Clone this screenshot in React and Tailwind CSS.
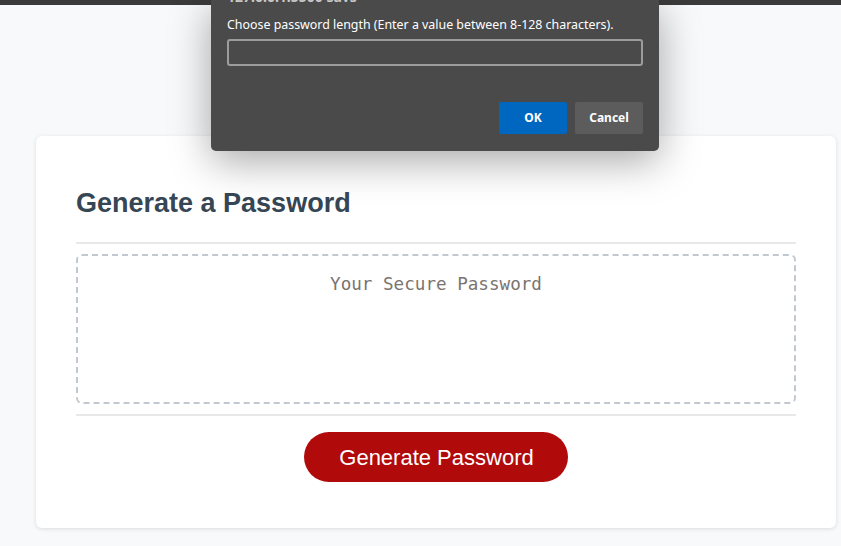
import React from 'react';

const PromptDialog = () => {
    return (
        <div className="absolute left-[211px] top-0 w-[448px] h-[151px] bg-[#4a4a4a] rounded-b-[5px] shadow-[0_10px_40px_rgba(0,0,0,0.35)] overflow-hidden font-['Noto_Sans',sans-serif]">
            <div className="px-4 -mt-[10px]">
                <div className="text-[14px] font-bold text-[#c8c8c8] leading-[14px] h-[12px] overflow-hidden">127.0.0.1:5500 says</div>
                <p className="text-white text-[12.4px] leading-[18px] mt-[14px]">
                    Choose password length (Enter a value between 8-128 characters).
                </p>
                <div className="mt-[5px] h-[27px] border-2 border-[#9c9c9c] rounded-[3px] bg-[#4a4a4a]" />
                <div className="flex justify-end gap-2 mt-[36px]">
                    <button className="w-[68px] h-[32px] rounded-[2px] bg-[#0067c0] text-white text-[12px] font-bold">OK</button>
                    <button className="w-[68px] h-[32px] rounded-[2px] bg-[#5c5c5c] text-white text-[12px] font-bold">Cancel</button>
                </div>
            </div>
        </div>
    );
};

const App = () => {
    return (
        <div className="relative min-h-[546px] bg-[#f8f9fb] overflow-hidden">
            <div className="h-[5px] bg-[#3b3b3b]" />
            <div className="ml-[36px] mt-[131px] w-[800px] bg-white rounded-[6px] shadow-[0_1px_4px_rgba(0,0,0,0.12)] px-[40px] pt-[50px] pb-[46px]">
                <h2 className="text-[27px] leading-[34px] font-bold text-[#364655] font-['Liberation_Sans',Arial,sans-serif]">
                    Generate a Password
                </h2>
                <div className="mt-[22px] h-[2px] bg-[#e8e8e8]" />
                <div className="mt-[10px] h-[150px] border-2 border-dashed border-[#c2c8cf] rounded-[6px] pt-[16px] text-center">
                    <span className="text-[17.6px] leading-[22px] text-[#7a7470] font-['DejaVu_Sans_Mono','Liberation_Mono',monospace]">
                        Your Secure Password
                    </span>
                </div>
                <div className="mt-[10px] h-[2px] bg-[#e8e8e8]" />
                <div className="flex justify-center mt-[16px]">
                    <button className="h-[50px] pl-[35px] pr-[34px] rounded-[25px] bg-[#b00a0a] text-white text-[22px] font-['Liberation_Sans',Arial,sans-serif]">
                        Generate Password
                    </button>
                </div>
            </div>
            <PromptDialog />
        </div>
    );
};

export default App;
